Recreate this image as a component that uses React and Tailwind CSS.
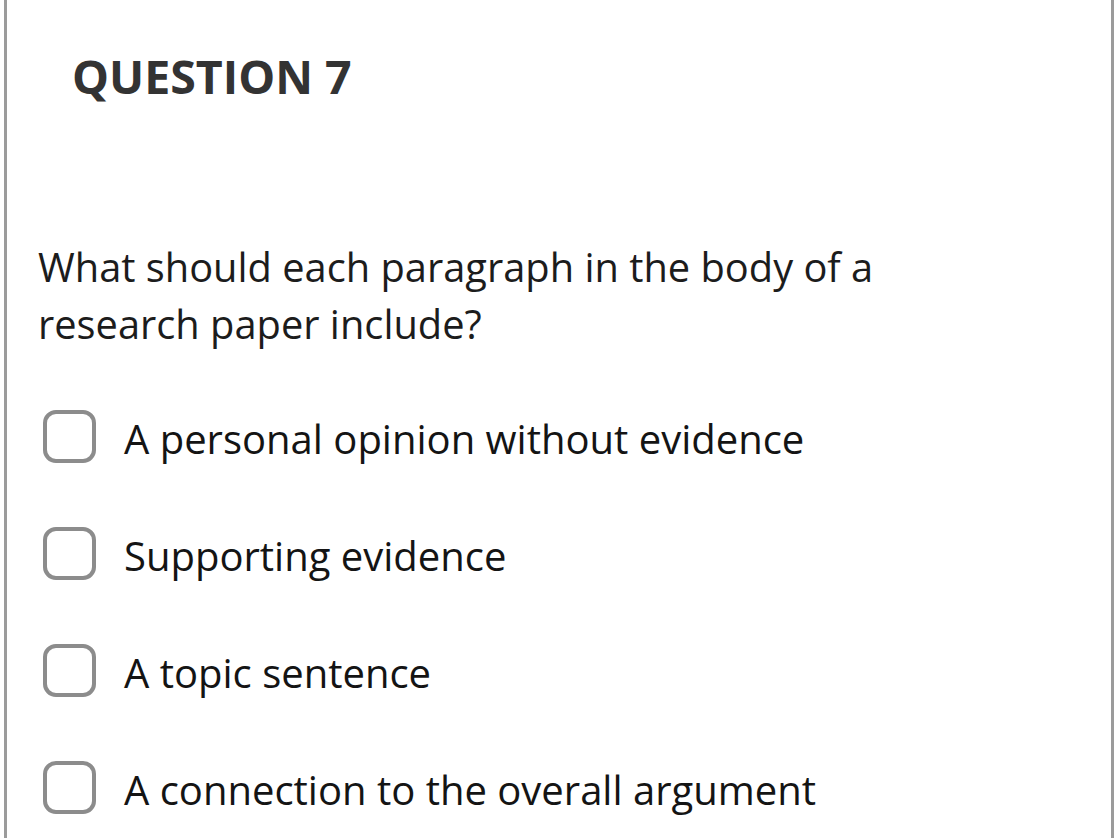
export default function App() {
  const options = [
    "A personal opinion without evidence",
    "Supporting evidence",
    "A topic sentence",
    "A connection to the overall argument",
  ];

  return (
    <div
      className="w-[1117px] h-[838px] bg-white overflow-hidden"
      style={{ fontFamily: '"Open Sans", "Liberation Sans", sans-serif' }}
    >
      <div className="ml-[4px] w-[1110px] h-full border-x-[3px] border-[#9b9b9b]">
        <h1 className="pt-[44px] pl-[65px] text-[46.5px] leading-[64px] font-bold text-[#333333]">
          QUESTION 7
        </h1>

        <p className="mt-[130px] pl-[31px] text-[39.8px] leading-[57px] text-[#1c1c1c]">
          What should each paragraph in the body of a
          <br />
          research paper include?
        </p>

        <ul className="mt-[26px] pl-[36px]">
          {options.map((label) => (
            <li key={label} className="h-[117px] flex items-center">
              <span className="w-[53px] h-[53px] shrink-0 rounded-[13px] border-[4px] border-[#8c8c8c] bg-white" />
              <span className="ml-[28px] pt-[4px] text-[40px] leading-[56px] text-[#141414]">
                {label}
              </span>
            </li>
          ))}
        </ul>
      </div>
    </div>
  );
}
